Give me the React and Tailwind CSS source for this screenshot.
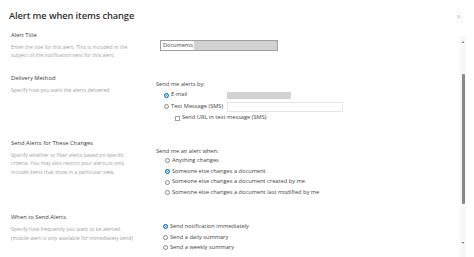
import { X } from 'lucide-react';

const font = { fontFamily: '"Open Sans", "Noto Sans", sans-serif' };

function Radio({ checked }) {
    return (
        <span className={`inline-block w-[5px] h-[5px] rounded-full border-[0.6px] shrink-0 ${checked ? 'border-[#0078d4] bg-[#0078d4] shadow-[inset_0_0_0_1px_#fff]' : 'border-[#8a8886] bg-white'}`} />
    );
}

function Option({ checked, label, h = 'h-[11px]', indent = 'pl-[9px]' }) {
    return (
        <div className={`flex items-center gap-[2px] ${h} ${indent}`}>
            <Radio checked={checked} />
            <span className="text-[5.7px] text-[#444] leading-none">{label}</span>
        </div>
    );
}

function Section({ label, desc, children, className }) {
    return (
        <div className={`flex ${className}`}>
            <div className="w-[145px] shrink-0">
                <div className="text-[5.8px] leading-[8px] text-[#3b3a39]">{label}</div>
                <div className="mt-[4px] text-[5.1px] leading-[8.4px] text-[#a19f9d]">{desc}</div>
            </div>
            <div className="flex-1">{children}</div>
        </div>
    );
}

export default function App() {
    return (
        <div className="w-[474px] h-[257px] overflow-hidden bg-white" style={font}>
            <div className="flex items-center justify-between h-[30px] pl-[9px] pr-[13px] pt-[2px]">
                <h1 className="text-[9.3px] font-semibold tracking-[-0.1px] text-[#323130] leading-none">Alert me when items change</h1>
                <X className="w-[5px] h-[5px] text-[#8a8886]" strokeWidth={2} />
            </div>

            <div className="flex">
                <div className="flex-1 pl-[11px]">
                    <Section
                        className="pt-[1px]"
                        label="Alert Title"
                        desc={<>Enter the title for this alert. This is included in the<br />subject of the notification sent for this alert.</>}
                    >
                        <div className="mt-[9px] ml-[4px] w-[118px] h-[11px] border-[0.6px] border-[#a19f9d] flex items-stretch">
                            <span className="text-[5.6px] text-[#444] leading-none pl-[2px] pr-[1px] flex items-center">Documents</span>
                            <span className="flex-1 bg-[#d2d2d2]" />
                        </div>
                    </Section>

                    <Section
                        className="mt-[14px]"
                        label="Delivery Method"
                        desc="Specify how you want the alerts delivered."
                    >
                        <div className="mt-[6px] text-[5.7px] leading-[8px] text-[#444]">Send me alerts by:</div>
                        <div className="flex items-center h-[11.5px] mt-[1.5px]">
                            <div className="w-[71px]"><Option checked label="E-mail" h="h-[11.5px]" indent="pl-[8px]" /></div>
                            <span className="w-[64px] h-[7px] bg-[#d2d2d2]" />
                        </div>
                        <div className="flex items-center h-[11.5px]">
                            <div className="w-[71px]"><Option label="Text Message (SMS)" h="h-[11.5px]" indent="pl-[8px]" /></div>
                            <span className="w-[116px] h-[10px] border-[0.6px] border-[#e5e5e5]" />
                        </div>
                        <div className="flex items-center gap-[2px] h-[11.5px] pl-[19px]">
                            <span className="w-[5px] h-[5px] border-[0.6px] border-[#a19f9d] bg-white" />
                            <span className="text-[5.7px] text-[#444] leading-none">Send URL in text message (SMS)</span>
                        </div>
                    </Section>

                    <Section
                        className="mt-[15px]"
                        label="Send Alerts for These Changes"
                        desc={<>Specify whether to filter alerts based on specific<br />criteria. You may also restrict your alerts to only<br />include items that show in a particular view.</>}
                    >
                        <div className="mt-[8px] text-[5.7px] leading-[8px] text-[#444]">Send me an alert when:</div>
                        <div className="mt-[0.6px]">
                            <Option label="Anything changes" h="h-[10.7px]" />
                            <Option checked label="Someone else changes a document" h="h-[10.7px]" />
                            <Option label="Someone else changes a document created by me" h="h-[10.7px]" />
                            <Option label="Someone else changes a document last modified by me" h="h-[10.7px]" />
                        </div>
                    </Section>

                    <Section
                        className="mt-[15px]"
                        label="When to Send Alerts"
                        desc={<>Specify how frequently you want to be alerted.<br />(mobile alert is only available for immediately send)</>}
                    >
                        <div className="mt-[8.5px]">
                            <Option checked label="Send notification immediately" h="h-[10.5px]" indent="pl-[7px]" />
                            <Option label="Send a daily summary" h="h-[10.5px]" indent="pl-[7px]" />
                            <Option label="Send a weekly summary" h="h-[10.5px]" indent="pl-[7px]" />
                        </div>
                    </Section>
                </div>

                <div className="w-[6px] mr-[8px] mt-[6px] h-[223px] bg-[#f8f8f8] flex flex-col items-center">
                    <span className="mt-[4px] text-[#605e5c] text-[3.5px] leading-none">▲</span>
                    <span className="mt-[30px] w-[3px] h-[130px] bg-[#8a8886] rounded-[1px]" />
                    <span className="mt-[37px] text-[#605e5c] text-[3.5px] leading-none">▼</span>
                </div>
            </div>
        </div>
    );
}
